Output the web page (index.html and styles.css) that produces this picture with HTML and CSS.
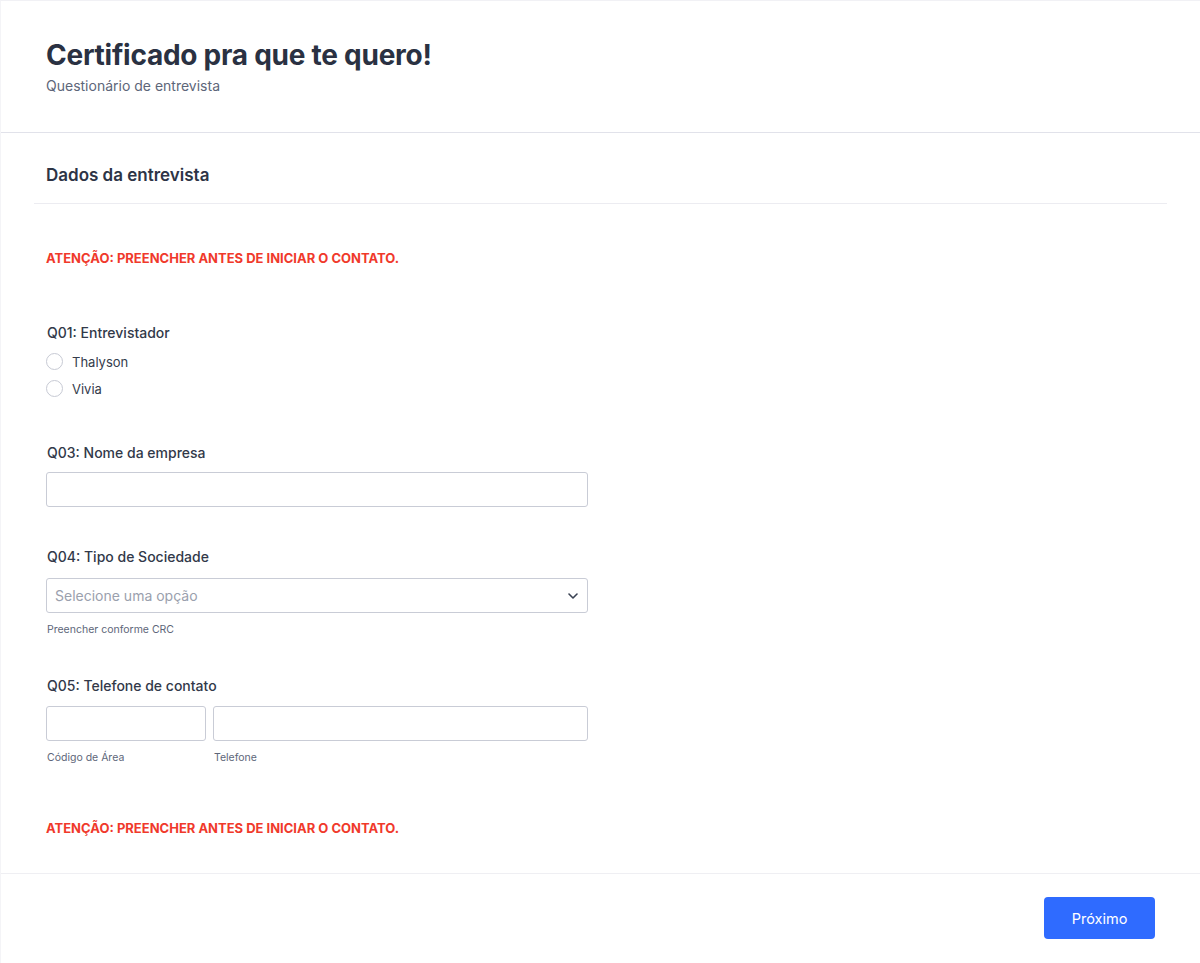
FILE: index.html
```html
<!DOCTYPE html>
<html lang="pt">
<head>
<meta charset="utf-8">
<title>Certificado pra que te quero!</title>
<link rel="stylesheet" href="styles.css">
</head>
<body>
<div class="page">
  <header class="header">
    <h1 class="title">Certificado pra que te quero!</h1>
    <p class="subtitle">Questionário de entrevista</p>
  </header>
  <main class="main">
    <div class="section-head">
      <h2 class="section-title">Dados da entrevista</h2>
    </div>
    <div class="form">
      <p class="warning warning-top">ATENÇÃO: PREENCHER ANTES DE INICIAR O CONTATO.</p>

      <div class="field field-q01">
        <div class="label">Q01: Entrevistador</div>
        <label class="radio"><span class="circle"></span><span>Thalyson</span></label>
        <label class="radio"><span class="circle"></span><span>Vivia</span></label>
      </div>

      <div class="field field-q03">
        <div class="label">Q03: Nome da empresa</div>
        <div class="input wide"></div>
      </div>

      <div class="field field-q04">
        <div class="label">Q04: Tipo de Sociedade</div>
        <div class="input wide select">
          <span class="placeholder">Selecione uma opção</span>
          <svg class="chev" width="10" height="6" viewBox="0 0 10 6"><path d="M1 1l4 4 4-4" fill="none" stroke="#3a4253" stroke-width="1.6" stroke-linecap="round" stroke-linejoin="round"/></svg>
        </div>
        <div class="help">Preencher conforme CRC</div>
      </div>

      <div class="field field-q05">
        <div class="label">Q05: Telefone de contato</div>
        <div class="phone">
          <div class="phone-col area">
            <div class="input"></div>
            <div class="help">Código de Área</div>
          </div>
          <div class="phone-col num">
            <div class="input"></div>
            <div class="help">Telefone</div>
          </div>
        </div>
      </div>

      <p class="warning warning-bottom">ATENÇÃO: PREENCHER ANTES DE INICIAR O CONTATO.</p>
    </div>
  </main>
  <footer class="footer">
    <button class="btn">Próximo</button>
  </footer>
</div>
</body>
</html>
```

FILE: styles.css
```css
* { box-sizing: border-box; }
html, body { margin: 0; padding: 0; background: #ffffff; }
body {
  font-family: Inter, "Noto Sans", "Liberation Sans", sans-serif;
  color: #2b3242;
}
.page {
  width: 1200px;
  height: 963px;
  border-top: 1px solid #f1f1f5;
  border-left: 1px solid #f4f4f7;
  display: flex;
  flex-direction: column;
}
.header {
  height: 132px;
  flex-shrink: 0;
  padding: 37px 45px 0;
  border-bottom: 1px solid #e1e2ea;
}
.title {
  margin: 0;
  font-size: 28px;
  font-weight: 700;
  line-height: 34px;
  color: #2a3142;
  letter-spacing: -0.25px;
}
.subtitle {
  margin: 4px 0 0;
  font-size: 14px;
  line-height: 20px;
  color: #5d6679;
}
.main {
  flex: 1;
  padding: 0 33px;
}
.section-head {
  height: 71px;
  padding: 31px 12px 0;
  border-bottom: 1px solid #ececf1;
}
.section-title {
  margin: 0;
  font-size: 17px;
  font-weight: 600;
  line-height: 22px;
  color: #2d3446;
}
.form {
  padding: 0 12px;
}
.warning {
  margin: 0;
  font-size: 13px;
  font-weight: 700;
  line-height: 18px;
  color: #f0392b;
}
.warning-top { margin-top: 45px; }
.label {
  font-size: 14px;
  font-weight: 500;
  line-height: 20px;
  color: #323949;
  padding-left: 1px;
}
.field-q01 { margin-top: 56px; }
.field-q01 .label { margin-bottom: 5px; }
.radio {
  display: flex;
  align-items: center;
  gap: 9px;
  height: 27px;
  font-size: 13px;
  color: #353c4c;
}
.circle {
  width: 17px;
  height: 17px;
  border: 1px solid #c7cad4;
  border-radius: 50%;
  background: #fff;
}
.field-q03 { margin-top: 41px; }
.field-q03 .label { margin-bottom: 9px; }
.field-q04 .label { margin-bottom: 11px; }
.field-q05 .label { margin-bottom: 10px; }
.input {
  height: 35px;
  border: 1px solid #c9ccd6;
  border-radius: 3px;
  background: #fff;
}
.wide { width: 542px; }
.field-q04 { margin-top: 40px; }
.select {
  display: flex;
  align-items: center;
  justify-content: space-between;
  padding: 0 9px 0 8px;
}
.placeholder {
  font-size: 14px;
  color: #9aa0ad;
}
.help {
  margin-top: 10px;
  font-size: 10.5px;
  line-height: 14px;
  color: #5d6679;
  padding-left: 1px;
}
.field-q05 { margin-top: 39px; }
.phone {
  display: flex;
  gap: 7px;
  width: 542px;
}
.area { width: 160px; }
.num { flex: 1; }
.phone .help { margin-top: 10px; }
.warning-bottom { margin-top: 54px; }
.footer {
  height: 90px;
  flex-shrink: 0;
  border-top: 1px solid #efeff3;
  display: flex;
  justify-content: flex-end;
  align-items: flex-start;
  padding: 23px 45px 0 0;
}
.btn {
  width: 111px;
  height: 42px;
  border: none;
  border-radius: 4px;
  background: #2f6bff;
  color: #ffffff;
  font-family: inherit;
  font-size: 14.5px;
  font-weight: 400;
}
```
